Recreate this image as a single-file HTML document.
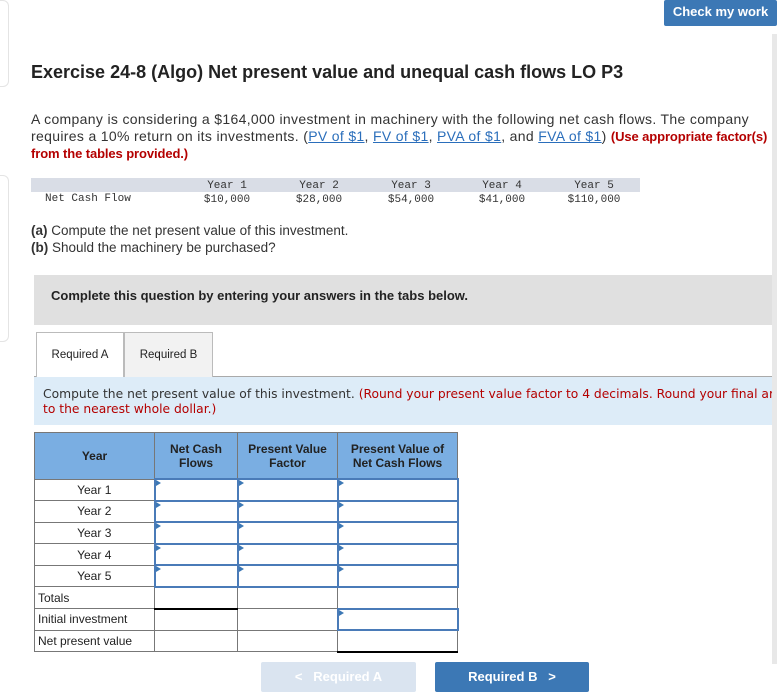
<!DOCTYPE html>
<html><head><style>
body{margin:0;width:777px;height:698px;background:#fff;position:relative;overflow:hidden;font-family:"Liberation Sans",Arial,sans-serif;color:#222}
.a{position:absolute}
.mono{font-family:"Liberation Mono",monospace;font-size:11px;color:#333}
.btn{background:#3c78b5;color:#fff;font-weight:bold;font-size:13px;text-align:center;border-radius:2px}
a{color:#2a6ebb;text-decoration:underline}
.red{color:#b40000;font-weight:bold}
table{border-collapse:collapse;position:absolute;left:34px;top:432px;font-size:12px;table-layout:fixed;width:423px}
td{border:1px solid #777;padding:0;height:19.6px;line-height:14px}
th{background:#7aaee2;border:1px solid #777;font-weight:bold;font-size:12px;color:#222;height:45px;line-height:14px;padding:0}
td.in{border:2px solid #4a7bb8;position:relative}
td.in:before{content:"";position:absolute;left:0;top:0;border-left:5px solid #3c78b5;border-top:3px solid transparent;border-bottom:3px solid transparent}
</style></head><body>
<div class="a" style="left:0;top:0;width:8px;height:85px;border:1px solid #e4e4e4;border-left:none;border-radius:0 6px 6px 0"></div>
<div class="a" style="left:0;top:175px;width:8px;height:165px;border:1px solid #e4e4e4;border-left:none;border-radius:0 6px 6px 0"></div>
<div class="a btn" style="left:664px;top:0;width:113px;height:26px;line-height:24px">Check my work</div>
<div class="a" style="left:772px;top:34px;width:5px;height:630px;background:#e8e8e8"></div>
<div class="a" style="left:31px;top:62px;font-size:18px;font-weight:bold;color:#222">Exercise 24-8 (Algo) Net present value and unequal cash flows LO P3</div>
<div class="a" style="left:31px;top:111px;width:745px;font-size:14px;line-height:16.5px;color:#333;letter-spacing:0.33px;white-space:nowrap">A company is considering a $164,000 investment in machinery with the following net cash flows. The company<br>requires a 10% return on its investments. (<a>PV of $1</a>, <a>FV of $1</a>, <a>PVA of $1</a>, and <a>FVA of $1</a>) <span class="red" style="letter-spacing:-0.1px;font-size:13px">(Use appropriate factor(s)<br>from the tables provided.)</span></div>
<div class="a" style="left:31px;top:178px;width:609px;height:14px;background:#d9dde6"></div>
<div class="a mono" style="left:45px;top:193px">Net Cash Flow</div>
<div class="a mono" style="left:197px;top:179px;width:60px;text-align:center;line-height:14px">Year 1<br>$10,000</div>
<div class="a mono" style="left:289px;top:179px;width:60px;text-align:center;line-height:14px">Year 2<br>$28,000</div>
<div class="a mono" style="left:381px;top:179px;width:60px;text-align:center;line-height:14px">Year 3<br>$54,000</div>
<div class="a mono" style="left:472px;top:179px;width:60px;text-align:center;line-height:14px">Year 4<br>$41,000</div>
<div class="a mono" style="left:559px;top:179px;width:70px;text-align:center;line-height:14px">Year 5<br>$110,000</div>
<div class="a" style="left:31px;top:222px;font-size:13.5px;line-height:17px;color:#333"><b>(a)</b> Compute the net present value of this investment.<br><b>(b)</b> Should the machinery be purchased?</div>
<div class="a" style="left:34px;top:275px;width:738px;height:50px;background:#e0e0e0"></div>
<div class="a" style="left:51px;top:288px;font-size:13px;font-weight:bold;color:#222">Complete this question by entering your answers in the tabs below.</div>
<div class="a" style="left:34px;top:376px;width:738px;height:1px;background:#aaa"></div>
<div class="a" style="left:36px;top:332px;width:86px;height:45px;background:#fff;border:1px solid #bbb;border-bottom:none;font-size:11.5px;line-height:44px;text-align:center">Required A</div>
<div class="a" style="left:124px;top:332px;width:87px;height:44px;background:#f2f2f2;border:1px solid #bbb;border-bottom:none;font-size:11.5px;line-height:44px;text-align:center">Required B</div>
<div class="a" style="left:34px;top:377px;width:738px;height:48px;background:#ddecf8"></div>
<div class="a" style="left:43px;top:387px;width:729px;font-family:'DejaVu Sans',sans-serif;font-size:12.3px;line-height:15px;color:#333;white-space:nowrap;overflow:hidden">Compute the net present value of this investment. <span style="color:#b40000">(Round your present value factor to 4 decimals. Round your final ar</span><br><span style="color:#b40000">to the nearest whole dollar.)</span></div>
<table>
<colgroup><col style="width:120px"><col style="width:83px"><col style="width:100px"><col style="width:120px"></colgroup>
<tr><th>Year</th><th>Net Cash<br>Flows</th><th>Present Value<br>Factor</th><th>Present Value of<br>Net Cash Flows</th></tr>
<tr><td style="text-align:center">Year 1</td><td class="in"></td><td class="in"></td><td class="in"></td></tr>
<tr><td style="text-align:center">Year 2</td><td class="in"></td><td class="in"></td><td class="in"></td></tr>
<tr><td style="text-align:center">Year 3</td><td class="in"></td><td class="in"></td><td class="in"></td></tr>
<tr><td style="text-align:center">Year 4</td><td class="in"></td><td class="in"></td><td class="in"></td></tr>
<tr><td style="text-align:center">Year 5</td><td class="in"></td><td class="in"></td><td class="in"></td></tr>
<tr><td style="padding-left:3px">Totals</td><td style="border-bottom:2px solid #000;border-top:1px solid #000"></td><td></td><td style="border-top:1px solid #000"></td></tr>
<tr><td style="padding-left:3px">Initial investment</td><td></td><td></td><td class="in"></td></tr>
<tr><td style="padding-left:3px">Net present value</td><td></td><td></td><td style="border-bottom:2px solid #000;border-top:1px solid #000"></td></tr>
</table>
<div class="a btn" style="left:261px;top:662px;width:155px;height:30px;line-height:30px;background:#dae4f0;color:#fff">&lt;&nbsp;&nbsp; Required A</div>
<div class="a btn" style="left:435px;top:662px;width:154px;height:30px;line-height:30px">Required B &nbsp;&nbsp;&gt;</div>
</body></html>
